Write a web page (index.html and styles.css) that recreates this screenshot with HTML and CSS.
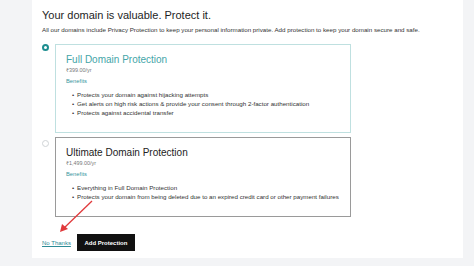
FILE: index.html
```html
<!DOCTYPE html>
<html>
<head>
<meta charset="utf-8">
<link rel="stylesheet" href="styles.css">
</head>
<body>
<div class="panel">
  <h1 class="title">Your domain is valuable. Protect it.</h1>
  <p class="subtitle">All our domains include Privacy Protection to keep your personal information private. Add protection to keep your domain secure and safe.</p>

  <div class="option option-first">
    <span class="radio radio-on"></span>
    <div class="card card-active">
      <div class="card-title teal">Full Domain Protection</div>
      <div class="price">₹399.00/yr</div>
      <div class="benefits">Benefits</div>
      <ul class="list">
        <li>Protects your domain against hijacking attempts</li>
        <li>Get alerts on high risk actions &amp; provide your consent through 2-factor authentication</li>
        <li>Protects against accidental transfer</li>
      </ul>
    </div>
  </div>

  <div class="option option-second">
    <span class="radio radio-off"></span>
    <div class="card card-plain">
      <div class="card-title">Ultimate Domain Protection</div>
      <div class="price">₹1,499.00/yr</div>
      <div class="benefits">Benefits</div>
      <ul class="list">
        <li>Everything in Full Domain Protection</li>
        <li>Protects your domain from being deleted due to an expired credit card or other payment failures</li>
      </ul>
    </div>
  </div>

  <div class="actions">
    <a class="no-thanks" href="#">No Thanks</a>
    <button class="add-btn">Add Protection</button>
  </div>

  <svg class="arrow" width="40" height="34" viewBox="0 0 40 34">
    <line x1="33" y1="1" x2="4" y2="29" stroke="#e0393b" stroke-width="1.3"/>
    <polygon points="1,32 3,24 9,29" fill="#e0393b"/>
  </svg>
</div>
</body>
</html>
```

FILE: styles.css
```css
html, body {
  margin: 0;
  padding: 0;
}
body {
  background: #f3f4f6;
  font-family: "Liberation Sans", Arial, sans-serif;
  width: 474px;
  height: 266px;
  overflow: hidden;
}
.panel {
  position: relative;
  margin-left: 32px;
  width: 431px;
  height: 258px;
  background: #ffffff;
  padding: 8px 0 0 10px;
  box-sizing: border-box;
}
.title {
  margin: 0;
  font-size: 11px;
  line-height: 14px;
  font-weight: normal;
  color: #1e1e1e;
}
.subtitle {
  margin: 4px 0 0;
  font-size: 6.2px;
  line-height: 8px;
  color: #333;
}
.option {
  display: flex;
  align-items: flex-start;
}
.option-first {
  margin-top: 10px;
}
.option-second {
  margin-top: 4px;
}
.radio {
  width: 7px;
  height: 7px;
  box-sizing: border-box;
  border-radius: 50%;
  margin: 0 6px 0 0;
  flex: none;
}
.radio-on {
  border: 2.2px solid #1e8e90;
  background: #fff;
  margin-top: 0px;
}
.radio-off {
  border: 1px solid #cfd3d6;
  background: #fff;
  margin-top: 3px;
}
.card {
  width: 296px;
  box-sizing: border-box;
  padding: 9px 10px 15px;
  background: #fff;
}
.card-active {
  border: 1px solid #bfe0e0;
}
.card-plain {
  border: 1px solid #9a9a9a;
}
.card-title {
  font-size: 10px;
  line-height: 12px;
  color: #222;
}
.teal {
  color: #45a5a8;
}
.price {
  font-size: 5.4px;
  line-height: 7px;
  color: #777;
  margin-top: 1px;
}
.benefits {
  margin-top: 4px;
  font-size: 5.8px;
  line-height: 7px;
  color: #3a96a0;
}
.list {
  list-style: none;
  margin: 5px 0 0;
  padding: 0;
  font-size: 6.2px;
  line-height: 9px;
  color: #333;
}
.list li {
  display: flex;
  padding-left: 6px;
}
.list li::before {
  content: "•";
  width: 5px;
  flex: none;
}
.actions {
  display: flex;
  align-items: center;
  margin-top: 17px;
}
.no-thanks {
  font-size: 6px;
  color: #2d8b95;
  text-decoration: underline;
  margin-right: 6px;
}
.add-btn {
  width: 58px;
  height: 17px;
  padding: 0;
  border: none;
  background: #111;
  color: #fff;
  font-family: "Liberation Sans", Arial, sans-serif;
  font-weight: bold;
  font-size: 6px;
}
.arrow {
  position: absolute;
  left: 27px;
  top: 200px;
}
```
